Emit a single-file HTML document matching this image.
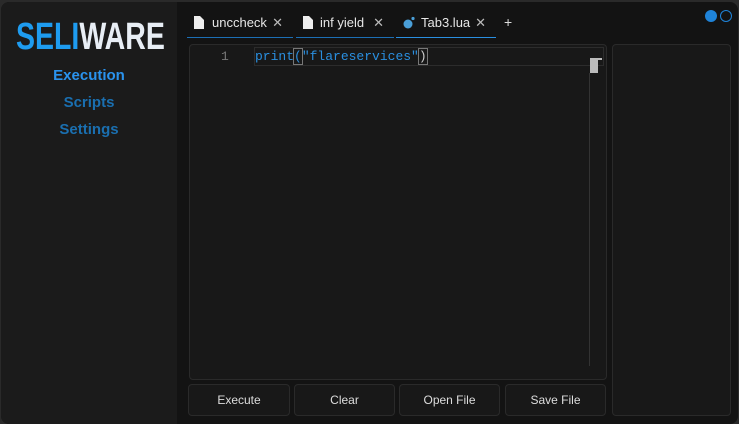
<!DOCTYPE html>
<html><head><style>
body{margin:0;width:739px;height:424px;background:#2a2a2a;overflow:hidden;font-family:"Liberation Sans",sans-serif;position:relative}
.win{position:absolute;left:1px;top:2px;width:737px;height:422px;background:#131313;border-radius:8px;overflow:hidden}
.side{position:absolute;left:0;top:0;width:176px;height:422px;background:#1b1b1b}
.logo{position:absolute;left:15px;top:14px;font:bold 38px "Liberation Sans",sans-serif;letter-spacing:0px;transform:scaleX(0.75);transform-origin:left top;white-space:nowrap}
.nav{position:absolute;width:176px;text-align:center;font-weight:bold;font-size:15px}
.tab{position:absolute;top:10px;height:25px;border-bottom:1px solid #1c6fb5;color:#e6e6e6;font-size:13px;line-height:22px}
.tab .x{position:absolute;right:10px;top:0;color:#bbb;font-size:13px}
.ed{position:absolute;left:188px;top:42px;width:416px;height:334px;background:#181818;border:1px solid #2a2a2a;border-radius:4px}
.rp{position:absolute;left:611px;top:42px;width:117px;height:370px;background:#181818;border:1px solid #2a2a2a;border-radius:4px}
.btn{position:absolute;top:382px;height:30px;background:#181818;border:1px solid #2a2a2a;border-radius:4px;color:#ddd;font-size:12px;text-align:center;line-height:30px}
.code{position:absolute;font-family:"Liberation Mono",monospace;font-size:13px;top:47px}
</style></head><body>
<div class="win">
<div class="side">
<div class="logo"><span style="color:#1e9cf0">SELI</span><span style="color:#e8eef5">WARE</span></div>
<div class="nav" style="top:65px;color:#2a93ee">Execution</div>
<div class="nav" style="top:92px;color:#1a6fb0">Scripts</div>
<div class="nav" style="top:119px;color:#1a6fb0">Settings</div>
</div>
<div class="tab" style="left:186px;width:106px"><svg style="position:absolute;left:7px;top:4px" width="10" height="13"><path d="M0 0h6l4 4v9H0z" fill="#eee"/></svg><span style="position:absolute;left:25px">unccheck</span><span class="x">✕</span></div>
<div class="tab" style="left:295px;width:98px"><svg style="position:absolute;left:7px;top:4px" width="10" height="13"><path d="M0 0h6l4 4v9H0z" fill="#eee"/></svg><span style="position:absolute;left:24px">inf yield</span><span class="x">✕</span></div>
<div class="tab" style="left:395px;width:100px;border-color:#2a8fe0"><svg style="position:absolute;left:6px;top:4px" width="13" height="13"><circle cx="6" cy="8" r="4.5" fill="#4a9fd8"/><circle cx="11" cy="2.5" r="1.6" fill="#4a9fd8"/></svg><span style="position:absolute;left:25px">Tab3.lua</span><span class="x">✕</span></div>
<div style="position:absolute;left:503px;top:12px;color:#ddd;font-size:14px">+</div>
<div style="position:absolute;left:704px;top:8px;width:12px;height:12px;border-radius:50%;background:#1f83d8"></div>
<div style="position:absolute;left:719px;top:8px;width:10px;height:10px;border-radius:50%;border:1px solid #1f83d8"></div>
<div class="ed"></div>
<div style="position:absolute;left:253px;top:45px;width:348px;height:17px;border:1px solid #2c2c2c"></div>
<div class="code" style="left:220px;color:#777">1</div>
<div class="code" style="left:254px;color:#2a8fe0">print<span style="outline:1px solid #777">(</span>"flareservices"<span style="outline:1px solid #777;color:#ccc">)</span></div>
<div style="position:absolute;left:589px;top:56px;width:8px;height:15px;background:#bbb"></div>
<div style="position:absolute;left:597px;top:56px;width:4px;height:2px;background:#bbb"></div>
<div style="position:absolute;left:588px;top:71px;width:1px;height:293px;background:#333"></div>
<div class="rp"></div>
<div class="btn" style="left:187px;width:100px">Execute</div>
<div class="btn" style="left:293px;width:99px">Clear</div>
<div class="btn" style="left:398px;width:99px">Open File</div>
<div class="btn" style="left:504px;width:99px">Save File</div>
</div>
</body></html>
